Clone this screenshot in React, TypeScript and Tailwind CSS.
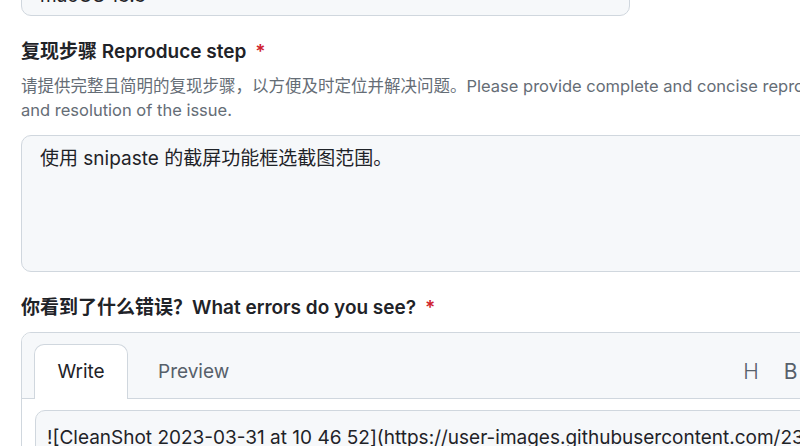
import React from 'react';

const font = { fontFamily: 'Inter, "Noto Sans CJK SC", sans-serif' };

const Label = ({ children }: { children: React.ReactNode }) => (
    <h3 className="h-[26px] text-[19px] font-semibold leading-[26px] text-[#1f2328]">
        {children}
        <span className="ml-[9px] text-[#cf222e]">*</span>
    </h3>
);

const App = () => {
    return (
        <div className="h-[446px] w-[800px] overflow-hidden bg-white" style={font}>
            <div className="w-[900px] pl-[21px]">
                <div className="-mt-[28px] flex h-[44px] w-[609px] items-center rounded-[10px] border border-[#d0d7de] bg-[#f6f8fa] px-[18px] pt-[5px] text-[19px] text-[#1f2328]">
                    macOS 13.3
                </div>

                <div className="mt-[23px]">
                    <Label>复现步骤 Reproduce step</Label>
                </div>
                <p className="mt-[9px] whitespace-nowrap text-[16.5px] leading-[24px] text-[#656d76]">
                    请提供完整且简明的复现步骤，以方便及时定位并解决问题。Please provide complete and concise reproduction steps to facilitate timely positioning
                    <br />
                    and resolution of the issue.
                </p>
                <div className="mt-[13px] h-[137px] rounded-[10px] border border-[#d0d7de] bg-[#f6f8fa] px-[18px] pt-[10px] text-[19px] leading-[26px] text-[#1f2328]">
                    使用 snipaste 的截屏功能框选截图范围。
                </div>

                <div className="mt-[23px]">
                    <Label>你看到了什么错误？What errors do you see?</Label>
                </div>
                <div className="mt-[11px] overflow-hidden rounded-[10px] border border-[#d0d7de]">
                    <div className="flex h-[66px] items-end border-b border-[#d0d7de] bg-[#f6f8fa] pl-[12px]">
                        <div className="-mb-px flex h-[55px] w-[94px] items-center justify-center rounded-t-[10px] border border-b-0 border-[#d0d7de] bg-white text-[19px] text-[#1f2328]">
                            Write
                        </div>
                        <div className="flex h-[55px] items-center px-[30px] pt-[3px] text-[19px] text-[#57606a]">Preview</div>
                        <div className="ml-[484px] flex h-[55px] items-center gap-[25px] pt-[3px] text-[21px] font-light text-[#57606a]">
                            <span>H</span>
                            <span className="font-normal">B</span>
                        </div>
                    </div>
                    <div className="bg-white px-[13px] pt-[11px]">
                        <div className="h-[80px] whitespace-nowrap rounded-[10px] border border-[#d0d7de] bg-[#f6f8fa] px-[11px] pt-[14px] text-[19px] leading-[26px] text-[#1f2328]">
                            ![CleanShot 2023-03-31 at 10 46 52](https://user-images.githubusercontent.com/23
                        </div>
                    </div>
                </div>
            </div>
        </div>
    );
};

export default App;
